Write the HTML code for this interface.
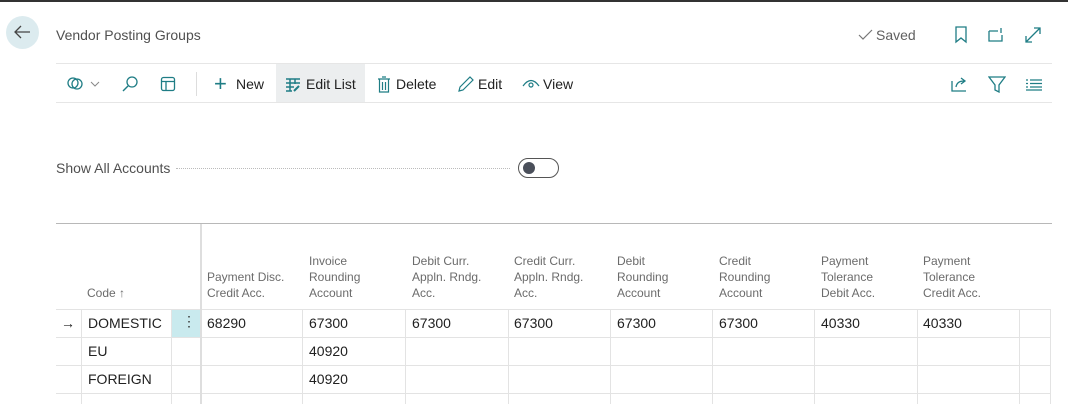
<!DOCTYPE html>
<html><head><meta charset="utf-8"><style>
*{margin:0;padding:0;box-sizing:border-box}
body{width:1068px;height:404px;overflow:hidden;background:#fff;font-family:"Segoe UI","Liberation Sans",sans-serif;color:#212121;position:relative}
.a{position:absolute;white-space:nowrap}
.h{font-size:12px;color:#6b6b6b;line-height:16px}
.c{font-size:14px;color:#212121}
.vl{position:absolute;width:1px;background:#e3e3e3}
.hl{position:absolute;height:1px;background:#e3e3e3}
.t{color:#1f7d85}
</style></head><body>
<div class="a" style="left:0;top:0;width:1068px;height:2px;background:#333"></div>
<div class="a" style="left:6px;top:16px;width:33px;height:33px;border-radius:50%;background:#dcebef"></div>
<svg class="a" style="left:12px;top:24px" width="20" height="16" viewBox="0 0 20 16"><path d="M18 8H3M9 2L3 8l6 6" fill="none" stroke="#444" stroke-width="1.3"/></svg>
<div class="a" style="left:56px;top:27px;font-size:14px;color:#505050">Vendor Posting Groups</div>
<svg class="a" style="left:858px;top:29px" width="16" height="12"><path d="M1 6l4 4 9-9" fill="none" stroke="#777" stroke-width="1.2"/></svg>
<div class="a" style="left:876px;top:27px;font-size:14px;color:#606060">Saved</div>
<svg class="a" style="left:954px;top:26px" width="14" height="18"><path d="M2 1h10v15l-5-4-5 4z" fill="none" stroke="#1f7d85" stroke-width="1.3"/></svg>
<svg class="a" style="left:988px;top:27px" width="18" height="16"><path d="M1 4h9M1 4v10h13V8M13 1v5" fill="none" stroke="#1f7d85" stroke-width="1.3"/></svg>
<svg class="a" style="left:1024px;top:26px" width="18" height="18"><path d="M2 16L16 2M2 10v6h6M10 2h6v6" fill="none" stroke="#1f7d85" stroke-width="1.3"/></svg>
<div class="hl" style="left:56px;top:63px;width:996px;background:#e6e6e6"></div>
<div class="hl" style="left:56px;top:102px;width:996px;background:#e6e6e6"></div>
<div class="a" style="left:276px;top:64px;width:89px;height:38px;background:#eceeef"></div>
<svg class="a" style="left:67px;top:76px" width="36" height="16"><circle cx="6" cy="7" r="5" fill="none" stroke="#1f7d85" stroke-width="1.3"/><circle cx="10" cy="8" r="5" fill="none" stroke="#1f7d85" stroke-width="1.3"/><path d="M24 6l4 4 4-4" fill="none" stroke="#888" stroke-width="1"/></svg>
<svg class="a" style="left:121px;top:75px" width="18" height="18"><circle cx="11" cy="7" r="5" fill="none" stroke="#1f7d85" stroke-width="1.3"/><path d="M7 11L2 16" stroke="#1f7d85" stroke-width="1.4"/></svg>
<svg class="a" style="left:160px;top:76px" width="16" height="16"><rect x="1.5" y="1.5" width="13" height="13" rx="2" fill="none" stroke="#1f7d85" stroke-width="1.3"/><path d="M1.5 5.5h13M6 5.5v9" stroke="#1f7d85" stroke-width="1.3"/></svg>
<div class="vl" style="left:196px;top:72px;height:24px;background:#ddd"></div>
<div class="a t" style="left:214px;top:73px;font-size:22px;font-weight:300;line-height:22px">+</div>
<div class="a c" style="left:236px;top:76px">New</div>
<svg class="a" style="left:285px;top:77px" width="16" height="15"><path d="M1 2h14M1 6h14M1 10h8M1 14h6M5 2v12M10 2v5" stroke="#1f7d85" stroke-width="1.5"/><path d="M9 14l5-5" stroke="#1f7d85" stroke-width="2"/></svg>
<div class="a c" style="left:306px;top:76px">Edit List</div>
<svg class="a" style="left:377px;top:76px" width="14" height="17"><path d="M1 3h12M5 1h4M2.5 3v13h9V3M5.5 6v8M8.5 6v8" fill="none" stroke="#1f7d85" stroke-width="1.2"/></svg>
<div class="a c" style="left:396px;top:76px">Delete</div>
<svg class="a" style="left:457px;top:75px" width="18" height="18"><path d="M2 16l1-4L13 2l3 3L6 15z" fill="none" stroke="#1f7d85" stroke-width="1.2"/></svg>
<div class="a c" style="left:478px;top:76px">Edit</div>
<svg class="a" style="left:522px;top:77px" width="18" height="14"><path d="M1 9Q9-2 17 9" fill="none" stroke="#1f7d85" stroke-width="1.2"/><circle cx="9" cy="8" r="2" fill="none" stroke="#1f7d85" stroke-width="1.2"/></svg>
<div class="a c" style="left:543px;top:76px">View</div>
<svg class="a" style="left:951px;top:76px" width="18" height="16"><path d="M1 5v10h14M5 11Q6 5 13 5M10 2l4 3-4 3" fill="none" stroke="#1f7d85" stroke-width="1.3"/></svg>
<svg class="a" style="left:988px;top:76px" width="18" height="17"><path d="M1 1h16l-6 8v7l-4-2V9z" fill="none" stroke="#1f7d85" stroke-width="1.3"/></svg>
<svg class="a" style="left:1026px;top:79px" width="16" height="12"><path d="M0 1h2M4 1h12M0 4.5h2M4 4.5h12M0 8h2M4 8h12M0 11h16" stroke="#1f7d85" stroke-width="1.2"/></svg>
<div class="a" style="left:56px;top:160px;font-size:14px;color:#505050">Show All Accounts</div>
<div class="a" style="left:176px;top:168px;width:334px;border-top:1px dotted #bbb"></div>
<div class="a" style="left:518px;top:158px;width:41px;height:20px;border:1px solid #555;border-radius:10px"></div>
<div class="a" style="left:523px;top:162px;width:12px;height:12px;border-radius:50%;background:#4a4f5a"></div>
<div class="hl" style="left:56px;top:223px;width:996px;background:#b8b8b8"></div>
<div class="hl" style="left:56px;top:309px;width:995px"></div>
<div class="hl" style="left:56px;top:337px;width:995px"></div>
<div class="hl" style="left:56px;top:365px;width:995px"></div>
<div class="hl" style="left:56px;top:393px;width:995px"></div>
<div class="vl" style="left:200px;top:224px;height:180px;width:2px;background:#dedede"></div>
<div class="vl" style="left:81px;top:309px;height:95px"></div>
<div class="vl" style="left:171px;top:309px;height:95px"></div>
<div class="vl" style="left:302px;top:309px;height:95px"></div>
<div class="vl" style="left:405px;top:309px;height:95px"></div>
<div class="vl" style="left:508px;top:309px;height:95px"></div>
<div class="vl" style="left:610px;top:309px;height:95px"></div>
<div class="vl" style="left:712px;top:309px;height:95px"></div>
<div class="vl" style="left:814px;top:309px;height:95px"></div>
<div class="vl" style="left:917px;top:309px;height:95px"></div>
<div class="vl" style="left:1019px;top:309px;height:95px"></div>
<div class="vl" style="left:1050px;top:309px;height:95px"></div>
<div class="a h" style="left:87px;top:285px">Code ↑</div>
<div class="a h" style="left:207px;top:269px">Payment Disc.<br>Credit Acc.</div>
<div class="a h" style="left:309px;top:253px">Invoice<br>Rounding<br>Account</div>
<div class="a h" style="left:412px;top:253px">Debit Curr.<br>Appln. Rndg.<br>Acc.</div>
<div class="a h" style="left:514px;top:253px">Credit Curr.<br>Appln. Rndg.<br>Acc.</div>
<div class="a h" style="left:617px;top:253px">Debit<br>Rounding<br>Account</div>
<div class="a h" style="left:719px;top:253px">Credit<br>Rounding<br>Account</div>
<div class="a h" style="left:821px;top:253px">Payment<br>Tolerance<br>Debit Acc.</div>
<div class="a h" style="left:923px;top:253px">Payment<br>Tolerance<br>Credit Acc.</div>
<div class="a" style="left:172px;top:310px;width:28px;height:27px;background:#c9eaee"></div>
<div class="a" style="left:182px;top:313px;font-size:14px;color:#333">⋮</div>
<div class="a c" style="left:61px;top:315px">→</div>
<div class="a c" style="left:88px;top:315px">DOMESTIC</div>
<div class="a c" style="left:207px;top:315px">68290</div>
<div class="a c" style="left:309px;top:315px">67300</div>
<div class="a c" style="left:412px;top:315px">67300</div>
<div class="a c" style="left:514px;top:315px">67300</div>
<div class="a c" style="left:617px;top:315px">67300</div>
<div class="a c" style="left:719px;top:315px">67300</div>
<div class="a c" style="left:821px;top:315px">40330</div>
<div class="a c" style="left:923px;top:315px">40330</div>
<div class="a c" style="left:88px;top:343px">EU</div>
<div class="a c" style="left:309px;top:343px">40920</div>
<div class="a c" style="left:88px;top:371px">FOREIGN</div>
<div class="a c" style="left:309px;top:371px">40920</div>
</body></html>
